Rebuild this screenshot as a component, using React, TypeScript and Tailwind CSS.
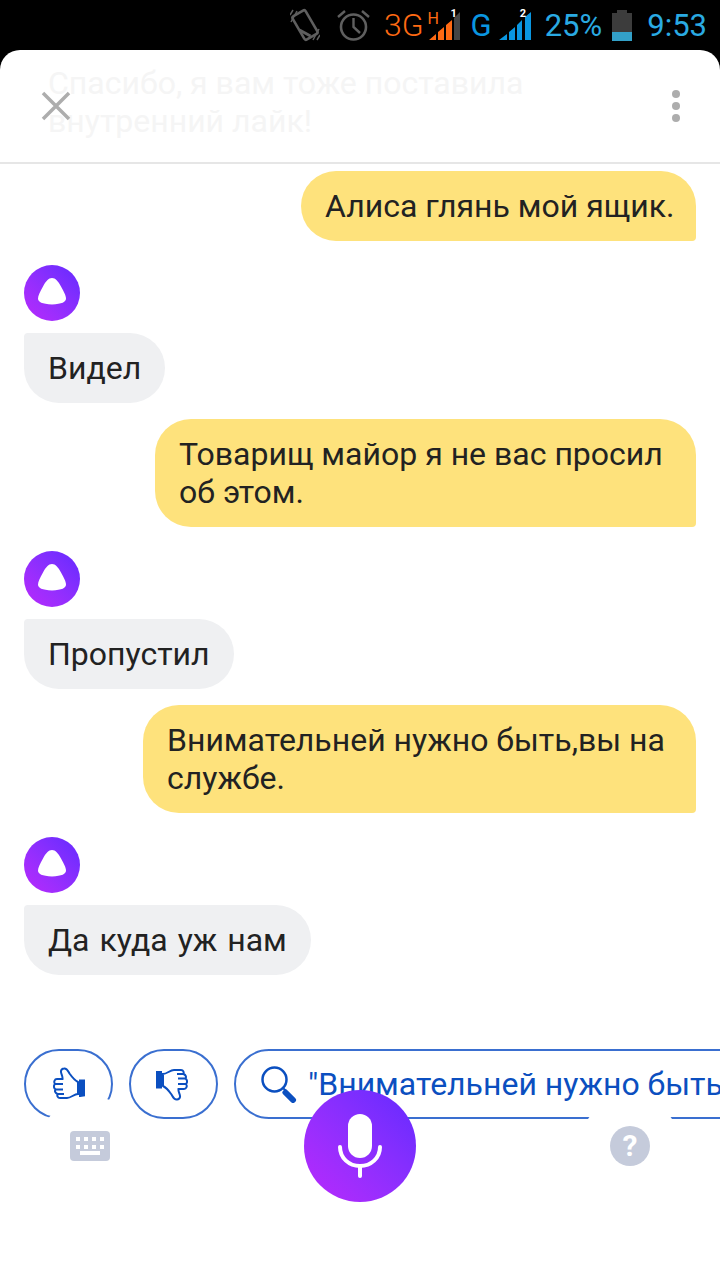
import React from 'react';

const font = { fontFamily: 'Roboto, "Noto Sans", sans-serif' };

function StatusBar() {
  return (
    <div className="h-[50px] bg-black flex items-center justify-end pr-[13px] text-[31px] leading-none">
      {/* vibrate */}
      <svg width="30" height="34" viewBox="0 0 30 34" fill="none" className="mr-[17px]">
        <rect x="7.500" y="3.500" width="15" height="27" rx="2" transform="rotate(-30 15 17)" stroke="#5f5f5f" strokeWidth="2.600" />
        <path d="M8.500 26 L19.500 32" transform="translate(1 -4)" stroke="#5f5f5f" strokeWidth="3" />
        <path d="M1 14 L7 3 M0 7 L3 2 M23 32 L29 21 M27 32 L30 27" stroke="#5f5f5f" strokeWidth="1.500" />
      </svg>
      {/* alarm */}
      <svg width="33" height="32" viewBox="0 0 33 32" fill="none" className="mr-[14px]">
        <circle cx="16.500" cy="18" r="12.500" stroke="#5f5f5f" strokeWidth="2.600" />
        <path d="M16.500 9 V18 L23 24" stroke="#5f5f5f" strokeWidth="2.400" />
        <path d="M1 8 L8 2 M32 8 L25 2" stroke="#5f5f5f" strokeWidth="2.400" />
      </svg>
      <span className="text-[32px] font-light text-[#ff6a13]">3G</span>
      <div className="relative w-[32px] h-[32px] ml-[5px] mr-[10px]">
        <svg width="32" height="32" viewBox="0 0 32 32" className="absolute inset-0">
          <path d="M0 31 L7 25 V31 Z M9 23 L15 18 V31 H9 Z M17 16 L23 11 V31 H17 Z" fill="#ff6a13" />
          <path d="M25 9 L31 3 V31 H25 Z" fill="#444444" />
        </svg>
        <span className="absolute left-[-1px] top-[2px] text-[16px] text-[#ff6a13]">H</span>
        <span className="absolute left-[22px] top-[-1px] text-[11px] font-bold text-white">1</span>
      </div>
      <span className="text-[#0a96e0]">G</span>
      <div className="relative w-[33px] h-[32px] ml-[7px] mr-[13px]">
        <svg width="33" height="32" viewBox="0 0 33 32" className="absolute inset-0">
          <path d="M0 31 L8 25 V31 Z M10 23 L16 18 V31 H10 Z M18 16 L23 11 V31 H18 Z M26 8 L32 3 V31 H26 Z" fill="#0a96e0" />
        </svg>
        <span className="absolute left-[21px] top-[-1px] text-[11px] font-bold text-white">2</span>
      </div>
      <span className="text-[#2aaae2]">25%</span>
      <div className="w-[20px] h-[31px] ml-[10px] mr-[15px] flex flex-col items-center">
        <div className="w-[10px] h-[3px] bg-[#3c3c3c]" />
        <div className="w-full h-[19px] bg-[#3c3c3c]" />
        <div className="w-full h-[9px] bg-[#33a0c8]" />
      </div>
      <span className="text-[#2aaae2]">9:53</span>
    </div>
  );
}

function Header() {
  return (
    <div className="relative h-[114px] shrink-0 border-b-2 border-[#e6e6e6] rounded-t-[20px] overflow-hidden">
      <p className="pl-[48px] pt-[14px] text-[32px] leading-[38px] text-[#f5f5f5]">
        Спасибо, я вам тоже поставила
        <br />
        внутренний лайк!
      </p>
      <svg width="30" height="30" viewBox="0 0 30 30" className="absolute left-[41px] top-[41px]">
        <path d="M2 2 L28 28 M28 2 L2 28" stroke="#adadad" strokeWidth="3.500" />
      </svg>
      <div className="absolute right-[40px] top-[40px] flex flex-col gap-[4px]">
        <span className="w-[8px] h-[8px] rounded-full bg-[#adadad]" />
        <span className="w-[8px] h-[8px] rounded-full bg-[#adadad]" />
        <span className="w-[8px] h-[8px] rounded-full bg-[#adadad]" />
      </div>
    </div>
  );
}

function AliceAvatar() {
  return (
    <div className="w-[56px] h-[56px] rounded-full bg-gradient-to-tr from-[#b927fc] to-[#6329ff]">
      <svg width="56" height="56" viewBox="0 0 56 56">
        <path
          d="M28 13 C31.500 13 34 16 37 21.500 C40 27 42 30.500 42 33.500 C42 37 38 39 28 39.500 C18 39 14 37 14 33.500 C14 30.500 16 27 19 21.500 C22 16 24.500 13 28 13 Z"
          fill="#fff"
        />
      </svg>
    </div>
  );
}

function UserBubble({ children, className }: { children: React.ReactNode; className?: string }) {
  return (
    <div className={`self-end bg-[#fee27c] rounded-[36px] rounded-br-[4px] px-[24px] py-[16px] text-[32px] leading-[38px] text-[#222222] whitespace-nowrap ${className ?? ''}`}>
      {children}
    </div>
  );
}

function BotBubble({ text, className }: { text: string; className?: string }) {
  return (
    <div className="mt-[24px] flex flex-col items-start gap-[12px]">
      <AliceAvatar />
      <div className={`bg-[#eff0f2] rounded-[36px] rounded-tl-[4px] px-[24px] py-[16px] text-[32px] leading-[38px] text-[#222222] mb-[16px] ${className ?? ''}`}>
        {text}
      </div>
    </div>
  );
}

function ThumbIcon({ className }: { className?: string }) {
  return (
    <svg width="32" height="32" viewBox="0 0 32 32" fill="none" className={className}>
      <path
        d="M11 1.500 C14 1 15 4 16.500 6.500 C19 10 21 13 25 15 V27 C21 27 18 31 14 31 H7 C4.500 31 4 28.500 4.500 27 C2 26 1.500 24 2.500 22.500 C0.500 21 0.500 18.500 2 17 C0.500 15 1.500 12 4 12 H9.500 C10 9 7.500 6.500 8 4 C8.300 2.500 9.500 1.700 11 1.500 Z"
        stroke="#0b4fc0"
        strokeWidth="2"
        fill="#fff"
      />
      <path d="M2 17 H10 M2.500 22.500 H10 M4.500 27 H11" stroke="#0b4fc0" strokeWidth="2" />
      <path d="M26 12.500 H32 V30 H26 Z" fill="#0b4fc0" />
    </svg>
  );
}

function SearchGlyph() {
  return (
    <svg width="38" height="38" viewBox="0 0 38 38" fill="none">
      <circle cx="14.500" cy="14.500" r="12" stroke="#0b4fc0" strokeWidth="2.500" />
      <path d="M23 23 L26 26" stroke="#0b4fc0" strokeWidth="2" />
      <path d="M25.500 27.500 L33 35" stroke="#0b4fc0" strokeWidth="6" strokeLinecap="round" />
    </svg>
  );
}

function Suggestions() {
  return (
    <div className="flex gap-[16px] pl-[24px] overflow-hidden">
      <button className="w-[89px] h-[70px] shrink-0 rounded-full border-2 border-[#3a6fd0] flex items-center justify-center">
        <ThumbIcon className="mb-[3px]" />
      </button>
      <button className="w-[89px] h-[70px] shrink-0 rounded-full border-2 border-[#3a6fd0] flex items-center justify-center">
        <ThumbIcon className="rotate-180 mt-[2px] mr-[3px]" />
      </button>
      <div className="h-[70px] shrink-0 rounded-full border-2 border-[#3a6fd0] flex items-center pl-[24px] pr-[40px] gap-[10px] text-[32px] text-[#0b4fc0] whitespace-nowrap">
        <SearchGlyph />
        <span>"Внимательней нужно быть</span>
      </div>
    </div>
  );
}

function BottomBar() {
  return (
    <div className="relative -mt-[29px] flex items-center justify-between px-[40px] h-[112px]">
      <div className="w-[100px] h-[100px] rounded-full bg-white flex items-center justify-center">
        <div className="w-[40px] h-[30px] rounded-[4px] bg-[#c5cbdb] flex flex-col items-center justify-center gap-[2px]">
          <div className="grid grid-cols-4 gap-x-[4px] gap-y-[4px]">
            {Array.from({ length: 8 }).map((_, i) => (
              <span key={i} className="w-[4px] h-[4px] bg-white" />
            ))}
          </div>
          <span className="w-[20px] h-[4px] bg-white" />
        </div>
      </div>
      <div className="w-[112px] h-[112px] rounded-full bg-gradient-to-tr from-[#b927fc] to-[#6329ff] flex items-center justify-center">
        <svg width="46" height="64" viewBox="0 0 46 64" fill="none">
          <rect x="11" y="0" width="24" height="44" rx="12" fill="#fff" />
          <path d="M3 33 C3 44 12 52 23 52 C34 52 43 44 43 33" stroke="#fff" strokeWidth="4" strokeLinecap="round" />
          <path d="M23 52 V62" stroke="#fff" strokeWidth="4" strokeLinecap="round" />
        </svg>
      </div>
      <div className="w-[100px] h-[100px] rounded-full bg-white flex items-center justify-center">
        <div className="w-[40px] h-[40px] rounded-full bg-[#c5cbdb] flex items-center justify-center text-[30px] font-bold text-white leading-none">
          ?
        </div>
      </div>
    </div>
  );
}

export default function App() {
  return (
    <div className="h-[1280px] w-[720px] bg-black overflow-hidden" style={font}>
      <StatusBar />
      <div className="h-[1230px] bg-white rounded-t-[20px] flex flex-col">
        <Header />
        <div className="flex flex-col px-[24px] pt-[7px] h-[885px]">
          <UserBubble className="w-[395px]">Алиса глянь мой ящик.</UserBubble>
          <BotBubble text="Видел" />
          <UserBubble className="w-[541px]">
            Товарищ майор я не вас просил
            <br />
            об этом.
          </UserBubble>
          <BotBubble text="Пропустил" />
          <UserBubble className="w-[553px]">
            Внимательней нужно быть,вы на
            <br />
            службе.
          </UserBubble>
          <BotBubble text="Да куда уж нам" className="[word-spacing:2px]" />
        </div>
        <Suggestions />
        <BottomBar />
      </div>
    </div>
  );
}
